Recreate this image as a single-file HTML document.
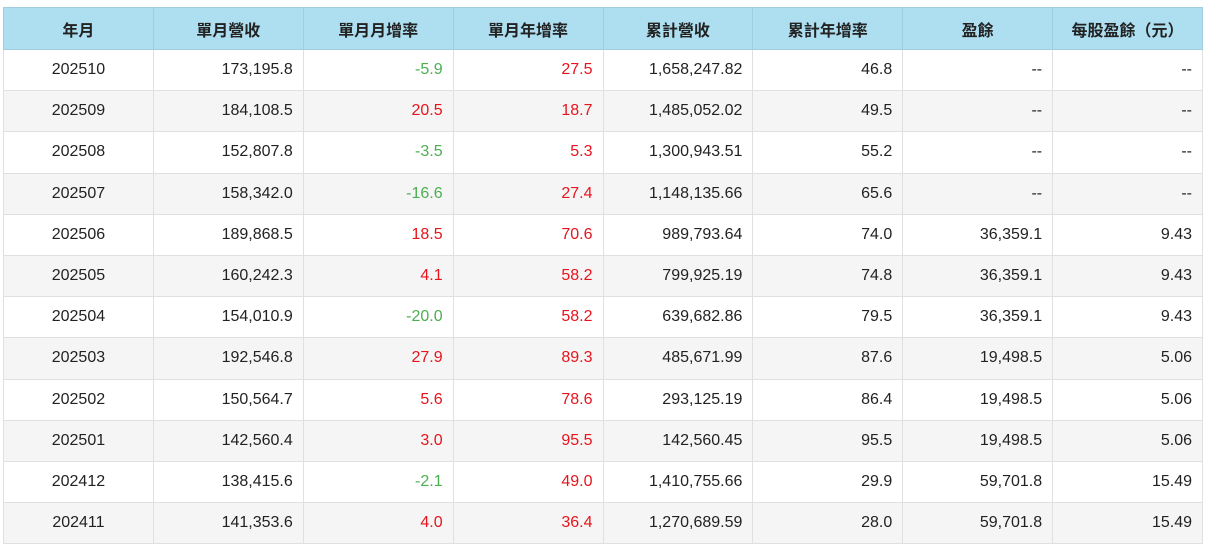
<!DOCTYPE html>
<html><head><meta charset="utf-8"><style>
body{margin:0;background:#fff;font-family:"Liberation Sans","Noto Sans CJK TC",sans-serif;}
table{position:absolute;left:3px;top:7px;border-collapse:collapse;table-layout:fixed;width:1200px;font-size:16px;color:#222;}
th{background:#addff0;height:41px;border:1px solid #9fcfdf;font-weight:bold;color:#222;padding:0;}
td{height:40.2px;border:1px solid #e0e0e0;text-align:right;padding:0 10px 0 0;}
td:first-child{text-align:center;padding:0;}
tr:nth-child(odd) td{background:#f5f5f5;}
.g{color:#4caf50}.r{color:#e8141c}
</style></head><body>
<table>
<tr><th>年月</th><th>單月營收</th><th>單月月增率</th><th>單月年增率</th><th>累計營收</th><th>累計年增率</th><th>盈餘</th><th>每股盈餘（元）</th></tr>
<tr><td>202510</td><td>173,195.8</td><td class="g">-5.9</td><td class="r">27.5</td><td>1,658,247.82</td><td>46.8</td><td>--</td><td>--</td></tr>
<tr><td>202509</td><td>184,108.5</td><td class="r">20.5</td><td class="r">18.7</td><td>1,485,052.02</td><td>49.5</td><td>--</td><td>--</td></tr>
<tr><td>202508</td><td>152,807.8</td><td class="g">-3.5</td><td class="r">5.3</td><td>1,300,943.51</td><td>55.2</td><td>--</td><td>--</td></tr>
<tr><td>202507</td><td>158,342.0</td><td class="g">-16.6</td><td class="r">27.4</td><td>1,148,135.66</td><td>65.6</td><td>--</td><td>--</td></tr>
<tr><td>202506</td><td>189,868.5</td><td class="r">18.5</td><td class="r">70.6</td><td>989,793.64</td><td>74.0</td><td>36,359.1</td><td>9.43</td></tr>
<tr><td>202505</td><td>160,242.3</td><td class="r">4.1</td><td class="r">58.2</td><td>799,925.19</td><td>74.8</td><td>36,359.1</td><td>9.43</td></tr>
<tr><td>202504</td><td>154,010.9</td><td class="g">-20.0</td><td class="r">58.2</td><td>639,682.86</td><td>79.5</td><td>36,359.1</td><td>9.43</td></tr>
<tr><td>202503</td><td>192,546.8</td><td class="r">27.9</td><td class="r">89.3</td><td>485,671.99</td><td>87.6</td><td>19,498.5</td><td>5.06</td></tr>
<tr><td>202502</td><td>150,564.7</td><td class="r">5.6</td><td class="r">78.6</td><td>293,125.19</td><td>86.4</td><td>19,498.5</td><td>5.06</td></tr>
<tr><td>202501</td><td>142,560.4</td><td class="r">3.0</td><td class="r">95.5</td><td>142,560.45</td><td>95.5</td><td>19,498.5</td><td>5.06</td></tr>
<tr><td>202412</td><td>138,415.6</td><td class="g">-2.1</td><td class="r">49.0</td><td>1,410,755.66</td><td>29.9</td><td>59,701.8</td><td>15.49</td></tr>
<tr><td>202411</td><td>141,353.6</td><td class="r">4.0</td><td class="r">36.4</td><td>1,270,689.59</td><td>28.0</td><td>59,701.8</td><td>15.49</td></tr>
</table>
</body></html>
